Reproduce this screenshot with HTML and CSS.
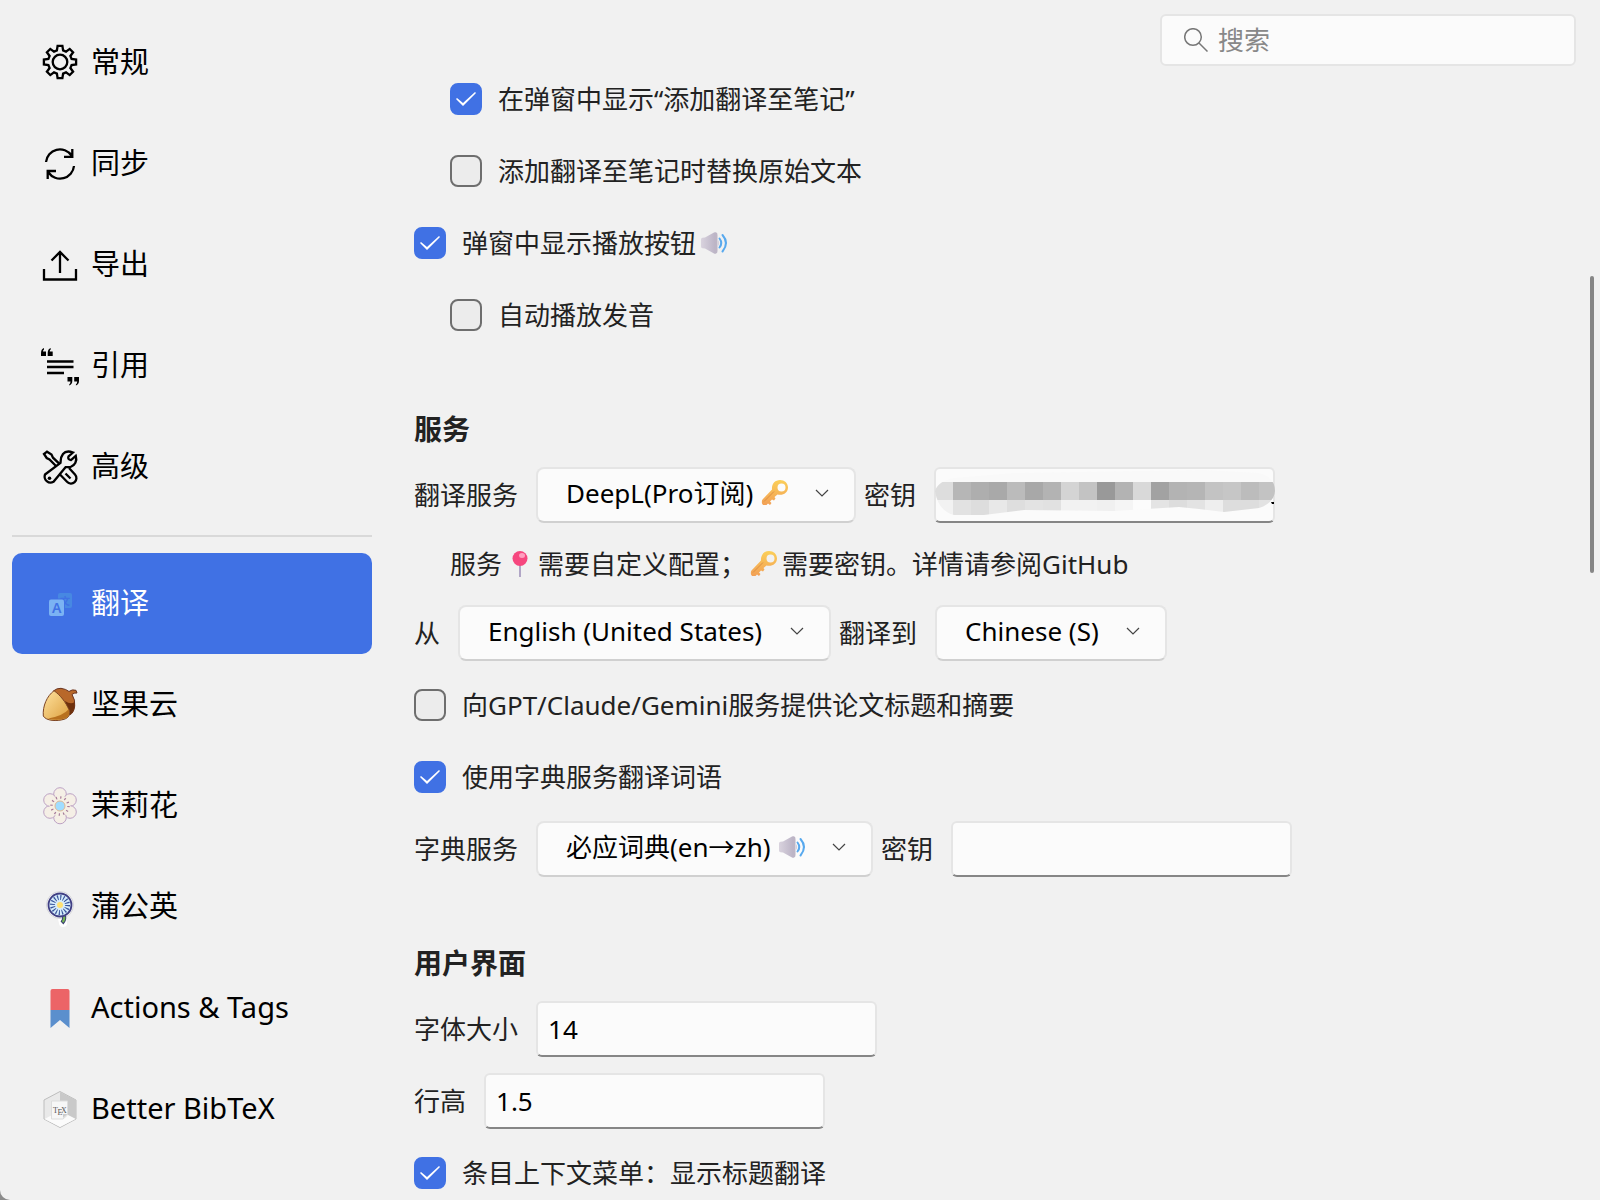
FILE: index.html
```html
<!DOCTYPE html>
<html lang="zh-CN">
    <head>
        <meta charset="UTF-8">
        <meta name="viewport" content="width=device-width, initial-scale=1.0">
        <title>翻译 - 设置</title>
        <link rel="stylesheet" href="styles.css">
    </head>
    <body>
        <!-- Shared icons -->
        <svg class="sprite" aria-hidden="true">
            <defs>
                <linearGradient id="horn" x1="0" x2="1">
                    <stop offset="0" stop-color="#d9d3de"/>
                    <stop offset="1" stop-color="#b9b1c4"/>
                </linearGradient>
                <linearGradient id="gold" x1="0" y1="0" x2="0" y2="1">
                    <stop offset="0" stop-color="#fbcf58"/>
                    <stop offset="1" stop-color="#f2a056"/>
                </linearGradient>
                <linearGradient id="nut" x1="0" y1="0" x2="1" y2="1">
                    <stop offset="0" stop-color="#ffe3a0"/>
                    <stop offset="1" stop-color="#dc9e3c"/>
                </linearGradient>
                <symbol id="speaker" viewBox="0 0 36 28">
                    <path d="M5 10.500Q5 9 6.500 8.800L9 8.500 18 3.600Q20.500 2.600 20.500 5.500V22.500Q20.500 25.500 18 24.400L9 19.600 6.500 19.200Q5 19 5 17.500z" fill="url(#horn)"/>
                    <path d="M18.500 4Q21.500 2.500 21.500 6V22Q21.500 25.500 18.500 24z" fill="#bdb5c6"/>
                    <path d="M22 11Q24.500 14 22 17z" fill="#d6d0dc"/>
                    <path d="M23.500 9.500Q27 14 23.500 18.500M26.500 6Q33.500 14 26.500 22.500" fill="none" stroke="#58a9ee" stroke-width="2" stroke-linecap="round"/>
                </symbol>
                <symbol id="key" viewBox="0 0 36 28">
                    <path fill="url(#gold)" fill-rule="evenodd" d="M23 1C18 1 14.500 5 15 10.500L5.500 20.500Q4.500 22 5 24.500L6 26 9.500 26 11 24.500 13 26 14.500 24 13 22.500 15 20.500 17 21.500 18.500 19.500 17.500 18 20.500 15.500C26 17 31 13.500 31 8.500 31 4 27.500 1 23 1zM24.500 4.500A4 4 0 1 1 24.500 12.500 4 4 0 0 1 24.500 4.500z"/>
                    <path d="M7 22.500L17 12.500" stroke="#dd8f45" stroke-width="1"/>
                </symbol>
                <symbol id="pin" viewBox="0 0 36 28">
                    <path d="M18 14V27" stroke="#b1a6c6" stroke-width="2"/>
                    <circle cx="18" cy="8.500" r="7.500" fill="#f6477f"/>
                    <ellipse cx="20" cy="5.500" rx="3" ry="2.500" fill="#ff9fc0"/>
                </symbol>
                <symbol id="chevron" viewBox="0 0 14 8">
                    <path d="M1 1L7 7 13 1" fill="none" stroke="#444" stroke-width="1.200"/>
                </symbol>
            </defs>
        </svg>

        <div class="window">
            <nav class="sidebar">
                <a class="item" href="#general">
                    <svg class="icon line" viewBox="-20 -20 40 41">
                        <path d="M-2.400-16.100H2.400L3.100-11.600 6-10.400 9.700-13.100 13.100-9.700 10.400-6 11.600-3.100 16.100-2.400V2.400L11.600 3.100 10.400 6 13.100 9.700 9.700 13.100 6 10.400 3.100 11.600 2.400 16.100H-2.400L-3.100 11.600-6 10.400-9.700 13.100-13.100 9.700-10.400 6-11.600 3.100-16.100 2.400V-2.400L-11.600-3.100-10.400-6-13.100-9.700-9.700-13.100-6-10.400-3.100-11.600z"/>
                        <circle r="7.300"/>
                    </svg>
                    <span>常规</span>
                </a>
                <a class="item" href="#sync">
                    <svg class="icon line" viewBox="-20 -20 40 41">
                        <path d="M-14-1A14 14 0 0 1 11.500-7.500M12.300-14V-6.200H4M14 3A14 14 0 0 1-11.500 9.500M-12.300 16V8H-4"/>
                    </svg>
                    <span>同步</span>
                </a>
                <a class="item" href="#export">
                    <svg class="icon line" viewBox="-20 -20 40 41">
                        <path d="M-16 5V15.500H16V5M0 9V-12M-8.500-3.500L0-12 8.500-3.500"/>
                    </svg>
                    <span>导出</span>
                </a>
                <a class="item" href="#cite">
                    <svg class="icon line" viewBox="-20 -20 40 41">
                        <path d="M-13-3.500H13.500M-13 2H13.500M-13 8H4"/>
                        <path class="solid" d="M-19-9V-12Q-19-16-16-17V-15.500Q-17-15-17-13.500H-14V-9zM-12.300-9V-12Q-12.300-16-9.300-17V-15.500Q-10.300-15-10.300-13.500H-7.300V-9z"/>
                        <path class="solid" d="M12.300 12V16Q12.300 19 9.200 20.500V19.500Q10.500 18.500 10.500 16.500H7.500V12zM19 12V16Q19 19 15.900 20.500V19.500Q17.200 18.500 17.200 16.500H14.200V12z"/>
                    </svg>
                    <span>引用</span>
                </a>
                <a class="item" href="#advanced">
                    <svg class="icon line" viewBox="-20 -20 40 41">
                        <path d="M-15 8.500L.500-3.200C1-5.500 0-8 3-12 5-14.500 9-15 13-13.500L8.500-9.500Q7.300-6.500 11-6L15.800-10.200C17.300-5 15-.500 10.500 1 8.500 1.600 7 .800 5.500 1.200L-6.500 15.800A6 6 0 0 1-15 8.500z"/>
                        <path d="M-4 0L-10.500-6.500-13.300-8-16-12-13-14.300-8.500-11.500-7-8.300-.500-2.200M0 8.500L7 15.800A5 5 0 0 0 15 8.500L9 2M5.500 7.500L10.500 12.500"/>
                        <circle class="solid" cx="-10.500" cy="12.200" r="1.800"/>
                    </svg>
                    <span>高级</span>
                </a>
                <hr>
                <a class="item selected" href="#translate" aria-current="page">
                    <svg class="icon" viewBox="-20 -20 40 41">
                        <rect x="-2" y="-10" width="14" height="15" rx="2" fill="#4788e2"/>
                        <text class="tiny" x="0" y="2" font-size="10" fill="#4071e4">文</text>
                        <rect x="-12" y="-4.500" width="17" height="18.500" rx="3" fill="#4071e4"/>
                        <rect x="-11" y="-3.500" width="15" height="16.500" rx="2" fill="#7bb3f3"/>
                        <text class="tiny" x="-8" y="10" font-size="14" fill="#4071e4">A</text>
                    </svg>
                    <span>翻译</span>
                </a>
                <a class="item" href="#nutstore">
                    <svg class="icon" viewBox="-20 -20 40 41">
                        <path d="M-6.700-13Q-3-16 1-15.700 6-15 9-12.500 12-15 16-13.700L17-11Q14-11.500 12-9.500 15.500-4 14.700 2 14 9 9.500 11z" fill="#b8682a" stroke="#6b3420"/>
                        <path d="M14.500-2Q11 1 5-3L9.500 11Q15.500 7 14.500-2z" fill="#6e300c"/>
                        <path d="M-6-13.300C-13-8-17.500 2-16.700 12-14 17-3 17.500 4 15.300 8.500 14 10 11 9.500 7 6-2 0-9-6-13.300z" fill="url(#nut)" stroke="#7d4524"/>
                        <path d="M-12 14.500Q3 12 9 5 10 11 7 13.500-2 17.500-12 14.500z" fill="#b8711f"/>
                    </svg>
                    <span>坚果云</span>
                </a>
                <a class="item" href="#jasmine">
                    <svg class="icon" viewBox="-20 -20 40 41">
                        <g fill="#f5efe6" stroke="#bda2c4">
                            <circle cx="0" cy="-11" r="6.300"/><circle cx="10" cy="-5" r="6.300"/>
                            <circle cx="10" cy="7" r="6.300"/><circle cx="0" cy="12.500" r="6.300"/>
                            <circle cx="-10" cy="7" r="6.300"/><circle cx="-10" cy="-5" r="6.300"/>
                        </g>
                        <circle cy="1" r="10.500" fill="#f5efe4"/>
                        <circle cy="1" r="8.500" fill="none" stroke="#a67a9a" stroke-width="2.500" stroke-dasharray="1.200 3.250"/>
                        <circle cy="1" r="5" fill="#a0ddff" stroke="#dfb994"/>
                    </svg>
                    <span>茉莉花</span>
                </a>
                <a class="item" href="#dandelion">
                    <svg class="icon" viewBox="-20 -20 40 41">
                        <path d="M1 8L3 17" stroke="#fff" stroke-width="8" stroke-linecap="round"/>
                        <circle cy="-1" r="13.500" fill="#fff" stroke="#d4d4d8"/>
                        <path d="M4 10Q5 14 2 17" fill="none" stroke="#3b3f72" stroke-width="4"/>
                        <path d="M4 10Q5 14 2.500 16" fill="none" stroke="#76b852" stroke-width="2"/>
                        <circle cy="-1" r="11.500" fill="#d5ebfb" stroke="#403f83" stroke-width="1.800"/>
                        <circle cy="-1" r="7.500" fill="none" stroke="#37539a" stroke-width="5" stroke-dasharray="1.100 1.845"/>
                        <circle cy="-1" r="3" fill="#ffe174"/>
                    </svg>
                    <span>蒲公英</span>
                </a>
                <a class="item" href="#actions">
                    <svg class="icon" viewBox="-20 -20 40 41">
                        <path d="M-9.500 3H9.500V21L0 13-9.500 21z" fill="#5b8fcd"/>
                        <path d="M-9.500 3V-16Q-9.500-18-7.500-18H7.500Q9.500-18 9.500-16V3z" fill="#ec6467"/>
                    </svg>
                    <span>Actions &amp; Tags</span>
                </a>
                <a class="item" href="#bibtex">
                    <svg class="icon" viewBox="-20 -20 40 41">
                        <path d="M0-16.500L16-8V11L0 19.500-16 11V-8z" fill="#e9e9e9" stroke="#bdbdbd"/>
                        <path d="M0-16L16-8V11L0 3z" fill="#c9c9c9"/>
                        <path d="M-15.500 11L0 3 15.500 11 0 19z" fill="#fbfbfb"/>
                        <path d="M-8.500-7H7.500V7L3 11H-8.500z" fill="#f7f7f7" stroke="#ddd"/>
                        <path d="M3 10V6H7.500z" fill="#ccc"/>
                        <g class="tex" font-size="8" fill="#555"><text x="-7" y="5">T</text><text x="-2.500" y="7">E</text><text x="1" y="5">X</text></g>
                    </svg>
                    <span>Better BibTeX</span>
                </a>
            </nav>

            <main class="content">
                <header>
                    <label class="search">
                        <svg viewBox="0 0 24 24" aria-hidden="true"><circle cx="9" cy="9" r="8.300"/><path d="M15 15L23.500 23.500"/></svg>
                        <input type="search" placeholder="搜索" aria-label="搜索">
                    </label>
                </header>

                <section>
                    <label class="row indent"><input type="checkbox" checked><span>在弹窗中显示“添加翻译至笔记”</span></label>
                    <label class="row indent"><input type="checkbox"><span>添加翻译至笔记时替换原始文本</span></label>
                    <label class="row"><input type="checkbox" checked><span>弹窗中显示播放按钮<svg class="emoji"><use href="#speaker"/></svg></span></label>
                    <label class="row indent"><input type="checkbox"><span>自动播放发音</span></label>
                </section>

                <section>
                    <h2>服务</h2>
                    <div class="row">
                        <label for="service">翻译服务</label>
                        <div class="select service">
                            <select id="service"><option>DeepL(Pro订阅)</option></select>
                            <svg class="emoji"><use href="#key"/></svg>
                            <svg class="chevron"><use href="#chevron"/></svg>
                        </div>
                        <label for="service-key">密钥</label>
                        <div class="secret">
                            <input type="text" id="service-key">
                            <svg viewBox="0 0 342 56" aria-hidden="true">
                                <clipPath id="smudge"><path d="M1 24Q4 14 20 11L80 6 270 3 325 6Q341 10 341 24 340 36 325 41L290 45 265 42 245 40 180 44 90 43 50 48 20 48Q4 44 1 24z"/></clipPath>
                                <g clip-path="url(#smudge)">
                                    <path d="M1 3H342V15H1z" fill="#f9f9f9"/>
                                    <g id="mosaic"></g>
                                </g>
                                <path d="M337 35H340V37H338z"/>
                            </svg>
                        </div>
                    </div>
                    <p class="note">服务<svg class="emoji"><use href="#pin"/></svg>需要自定义配置；<svg class="emoji"><use href="#key"/></svg>需要密钥。详情请参阅GitHub</p>
                    <div class="row">
                        <label for="from">从</label>
                        <div class="select from">
                            <select id="from"><option>English (United States)</option></select>
                            <svg class="chevron"><use href="#chevron"/></svg>
                        </div>
                        <label for="to">翻译到</label>
                        <div class="select to">
                            <select id="to"><option>Chinese (S)</option></select>
                            <svg class="chevron"><use href="#chevron"/></svg>
                        </div>
                    </div>
                    <label class="row"><input type="checkbox"><span>向GPT/Claude/Gemini服务提供论文标题和摘要</span></label>
                    <label class="row"><input type="checkbox" checked><span>使用字典服务翻译词语</span></label>
                    <div class="row">
                        <label for="dict">字典服务</label>
                        <div class="select dict">
                            <select id="dict"><option>必应词典(en→zh)</option></select>
                            <svg class="emoji"><use href="#speaker"/></svg>
                            <svg class="chevron"><use href="#chevron"/></svg>
                        </div>
                        <label for="dict-key">密钥</label>
                        <input type="text" id="dict-key">
                    </div>
                </section>

                <section>
                    <h2>用户界面</h2>
                    <div class="row">
                        <label for="font-size">字体大小</label>
                        <input type="text" id="font-size" value="14">
                    </div>
                    <div class="row">
                        <label for="line-height">行高</label>
                        <input type="text" id="line-height" value="1.5">
                    </div>
                    <label class="row"><input type="checkbox" checked><span>条目上下文菜单：显示标题翻译</span></label>
                </section>
            </main>
            <div class="scrollbar"></div>
        </div>
    <script>
        // Blocks that hide the key, two rows of 18px cells
        const rows = [
            ['ddd', 'b6b6b6', 'aeaeae', 'a9a9a9', 'bbb', 'a8a8a8', 'b3b3b3', 'd4d4d4', 'c3c3c3', '999', 'b3b3b3', 'd9d9d9', 'a2a2a2', 'b3b3b3', 'b5b5b5', 'c3c3c3', 'c6c6c6', 'bcbcbc', 'c3c3c3'],
            ['f2f2f2', 'e2e2e2', 'ddd', 'e8e8e8', 'dedede', 'e3e3e3', 'e1e1e1', 'f2f2f2', 'f2f2f2', 'f0f0f0', 'f5f5f5', 'fcfcfc', 'e4e4e4', 'ddd', 'e3e3e3', 'eee', 'ddd', 'ddd', 'e2e2e2']
        ];
        const mosaic = document.getElementById('mosaic');
        rows.forEach((colors, y) => {
            colors.forEach((color, x) => {
                const cell = document.createElementNS('http://www.w3.org/2000/svg', 'rect');
                cell.setAttribute('x', 1 + x * 18);
                cell.setAttribute('y', 15 + y * 18);
                cell.setAttribute('width', 18);
                cell.setAttribute('height', 18);
                cell.setAttribute('fill', '#' + color);
                mosaic.appendChild(cell);
            });
        });
    </script>
</body>
</html>
```
FILE: styles.css
```css
* {
    box-sizing: border-box;
}
body {
    margin: 0;
    background: #8c8c8c;
    font-family: 'Noto Sans', 'Noto Sans CJK SC', sans-serif;
    font-size: 26px;
    color: #222;
}
.sprite {
    position: absolute;
    width: 0;
    height: 0;
}
.window {
    position: relative;
    display: flex;
    height: 100vh;
    overflow: hidden;
    background: #f1f1f1;
    border-bottom-left-radius: 10px;
}
.sidebar {
    width: 384px;
    flex-shrink: 0;
    padding: 12px;
}
.item {
    display: flex;
    align-items: center;
    gap: 11px;
    height: 101px;
    padding-left: 28px;
    border-radius: 10px;
    font-size: 29px;
    line-height: 40px;
    color: #000;
    text-decoration: none;
}
.item span {
    padding-bottom: 2px;
}
.item.selected {
    background: #4071e4;
    color: #fff;
}
.icon {
    width: 40px;
    height: 41px;
    overflow: visible;
}
.line {
    fill: none;
    stroke: #000;
    stroke-width: 2.3;
}
.solid {
    fill: #000;
    stroke: none;
}
.tiny {
    font-weight: 600;
}
.tex {
    font-family: 'Liberation Serif', serif;
}
.sidebar hr {
    height: 2px;
    margin: 18px 0 16px;
    border: none;
    background: #d9d9d9;
}
.content {
    flex: 1;
    min-width: 0;
    padding: 14px 24px 0 30px;
}
header {
    display: flex;
    justify-content: flex-end;
    margin-bottom: 5px;
}
.search {
    display: flex;
    align-items: center;
    gap: 10px;
    width: 416px;
    height: 52px;
    padding: 0 22px;
    border: 2px solid #e5e5e5;
    border-radius: 6px;
    background: #fbfbfb;
}
.search svg {
    width: 24px;
    height: 24px;
    fill: none;
    stroke: #777;
    stroke-width: 1.5;
}
.search input {
    flex: 1;
    min-width: 0;
    padding: 0;
    border: none;
    outline: none;
    background: none;
    font: inherit;
}
.search input::placeholder {
    color: #888;
}
section {
    display: flex;
    flex-direction: column;
    align-items: flex-start;
    gap: 16px;
    margin-bottom: 68px;
}
h2 {
    margin: 0 0 4px;
    font-size: 28px;
    line-height: 36px;
}
.row {
    display: flex;
    align-items: center;
    height: 56px;
    line-height: 36px;
    white-space: nowrap;
}
.indent,
.note {
    margin-left: 36px;
}
.row > label {
    margin-right: 18px;
}
.select,
.secret {
    position: relative;
    margin-right: 8px;
}
.note {
    margin-top: 0;
    margin-bottom: 0;
    height: 50px;
    line-height: 50px;
    white-space: nowrap;
}
.emoji {
    width: 36px;
    height: 28px;
    vertical-align: -4px;
}
input[type="checkbox"] {
    appearance: none;
    width: 32px;
    height: 32px;
    margin: 0 16px 0 0;
    border: 2px solid #6e6e6e;
    border-radius: 8px;
    background: #ececec;
}
input[type="checkbox"]:checked {
    display: grid;
    place-items: center;
    border-color: #4071e4;
    background: #4071e4;
}
input[type="checkbox"]:checked::before {
    content: '';
    width: 20px;
    height: 14px;
    background: #fff;
    clip-path: polygon(0 7px, 1px 6px, 7px 11px, 19px 0, 20px 1px, 7px 14px);
}
select,
input[type="text"] {
    display: block;
    width: 341px;
    height: 56px;
    padding: 0 10px;
    border: 2px solid #e5e5e5;
    border-radius: 6px;
    background: #fbfbfb;
    color: #000;
    font: inherit;
}
input[type="text"] {
    border-bottom-color: #868686;
}
select {
    appearance: none;
    width: 100%;
    padding: 0 28px 4px;
    border-bottom-color: #d0d0d0;
    border-radius: 8px;
}
.service {
    width: 320px;
}
.from {
    width: 373px;
}
.to {
    width: 232px;
}
.dict {
    width: 337px;
}
.select .emoji {
    position: absolute;
    top: 12px;
    right: 63px;
    pointer-events: none;
}
.select .chevron {
    position: absolute;
    top: 22px;
    right: 27px;
    width: 14px;
    height: 8px;
    pointer-events: none;
}
.secret svg {
    position: absolute;
    top: 0;
    left: 0;
    width: 342px;
    height: 56px;
    pointer-events: none;
}
.scrollbar {
    position: absolute;
    top: 276px;
    right: 6px;
    width: 4px;
    height: 297px;
    border-radius: 2px;
    background: #868686;
}
```
